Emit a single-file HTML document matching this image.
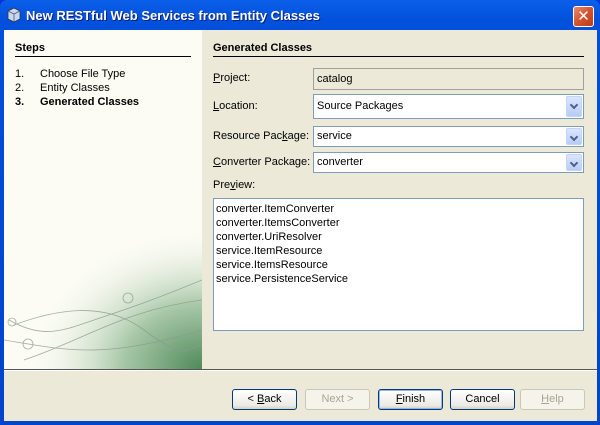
<!DOCTYPE html>
<html><head><style>
*{margin:0;padding:0;box-sizing:border-box}
body{width:600px;height:425px;overflow:hidden;font-family:"Liberation Sans",sans-serif;font-size:11px;color:#000;background:#0831d9}
#win{position:absolute;left:0;top:0;width:600px;height:425px;background:linear-gradient(#0a5fe8,#0350dc 20px,#0244cc);border-radius:7px 7px 0 0}
#title{position:absolute;left:26px;top:8px;color:#fff;font-weight:bold;font-size:13px;font-family:"Liberation Sans",sans-serif;text-shadow:1px 1px #0a1f7a}
#close{position:absolute;left:573px;top:6px;width:21px;height:21px;border:1px solid #fff;border-radius:3px;background:linear-gradient(135deg,#e88a6e,#d3522e 50%,#c03a16);color:#fff;font:bold 15px/18px "DejaVu Sans",sans-serif;text-align:center}
#client{position:absolute;left:4px;top:30px;width:593px;height:391px;background:#ece9d8}
#left{position:absolute;left:0;top:0;width:198px;height:339px;background:#fcfcf4;overflow:hidden}
#sep{position:absolute;left:0;top:339px;width:593px;height:2px;background:#555;border-bottom:1px solid #fff}
.h{position:absolute;font-weight:bold;font-size:11px}
.ul{position:absolute;height:1px;background:#000}
.t{position:absolute;white-space:nowrap}
.f{position:absolute;border:1px solid #7f9db9;background:#fff;padding-left:3px;line-height:20px}
.dd{position:absolute;right:1px;top:1px;bottom:1px;width:16px;background:linear-gradient(#dbe6fd,#b8ccf6);border-radius:2px;border:1px solid #c3d3fd}
.dd:after{content:"";position:absolute;left:4px;top:5px;width:4px;height:4px;border-right:2px solid #4d6185;border-bottom:2px solid #4d6185;transform:rotate(45deg)}
.b{position:absolute;top:359px;width:65px;height:21px;border:1px solid #003c74;border-radius:3px;background:linear-gradient(#fff,#ecebe6 80%,#d6d0c5);text-align:center;line-height:19px}
.dis{border-color:#c9c7ba;color:#a7a596;background:#f5f4ea}
</style></head><body>
<div id="win">
<svg style="position:absolute;left:6px;top:7px" width="16" height="16" viewBox="0 0 16 16"><path d="M8 1L14 4V12L8 15L2 12V4Z" fill="#c8d8f0" stroke="#334" stroke-width=".8"/><path d="M2 4L8 7L14 4M8 7V15" fill="none" stroke="#556" stroke-width=".8"/></svg>
<div id="title">New RESTful Web Services from Entity Classes</div>
<div id="close">✕</div>
<div id="client">
<div id="left">
<svg style="position:absolute;left:0;top:0" width="198" height="339">
<defs><radialGradient id="g" cx="1" cy="1" r="0.9"><stop offset="0" stop-color="#4f8a5a"/><stop offset="0.45" stop-color="#a8c8a8"/><stop offset="1" stop-color="#fcfcf4" stop-opacity="0"/></radialGradient></defs>
<rect x="0" y="180" width="198" height="159" fill="url(#g)"/>
<g fill="none" stroke="#8a9a8a" stroke-width="0.8" opacity="0.8">
<path d="M5 290C40 310 60 300 90 290S150 270 198 250"/>
<path d="M10 295C50 280 100 270 140 300S180 320 198 315"/>
<path d="M0 310C60 320 100 330 198 300"/>
<path d="M20 330C80 310 120 280 198 270"/>
<circle cx="24" cy="314" r="5"/><circle cx="124" cy="268" r="5"/><circle cx="8" cy="292" r="4"/>
</g></svg>
</div>
<div class="h" style="left:11px;top:12px">Steps</div>
<div class="ul" style="left:11px;top:26px;width:176px"></div>
<div class="t" style="left:11px;top:38px">1.</div><div class="t" style="left:36px;top:38px">Choose File Type</div>
<div class="t" style="left:11px;top:52px">2.</div><div class="t" style="left:36px;top:52px">Entity Classes</div>
<div class="t" style="left:11px;top:66px;font-weight:bold">3.</div><div class="t" style="left:36px;top:66px;font-weight:bold">Generated Classes</div>

<div class="h" style="left:209px;top:12px">Generated Classes</div>
<div class="ul" style="left:209px;top:26px;width:371px"></div>
<div class="t" style="left:209px;top:42px"><u>P</u>roject:</div>
<div class="f" style="left:309px;top:38px;width:271px;height:22px;background:#ece9d8;border-color:#a0a0a0">catalog</div>
<div class="t" style="left:209px;top:70px"><u>L</u>ocation:</div>
<div class="f" style="left:309px;top:64px;width:271px;height:25px;line-height:23px">Source Packages<div class="dd"></div></div>
<div class="t" style="left:209px;top:100px">Resource Pac<u>k</u>age:</div>
<div class="f" style="left:309px;top:96px;width:271px;height:21px;line-height:19px">service<div class="dd"></div></div>
<div class="t" style="left:209px;top:126px"><u>C</u>onverter Package:</div>
<div class="f" style="left:309px;top:122px;width:271px;height:21px;line-height:19px">converter<div class="dd"></div></div>
<div class="t" style="left:209px;top:149px">Pre<u>v</u>iew:</div>
<div class="f" style="left:209px;top:168px;width:371px;height:133px;line-height:14px;padding-top:3px;padding-left:2px">converter.ItemConverter<br>converter.ItemsConverter<br>converter.UriResolver<br>service.ItemResource<br>service.ItemsResource<br>service.PersistenceService</div>
<div id="sep"></div>
<div class="b" style="left:228px">&lt; <u>B</u>ack</div>
<div class="b dis" style="left:301px">Next &gt;</div>
<div class="b" style="left:374px;box-shadow:inset 0 0 0 1px #97b8ec"><u>F</u>inish</div>
<div class="b" style="left:446px">Cancel</div>
<div class="b dis" style="left:516px"><u>H</u>elp</div>
</div></div>
</body></html>
